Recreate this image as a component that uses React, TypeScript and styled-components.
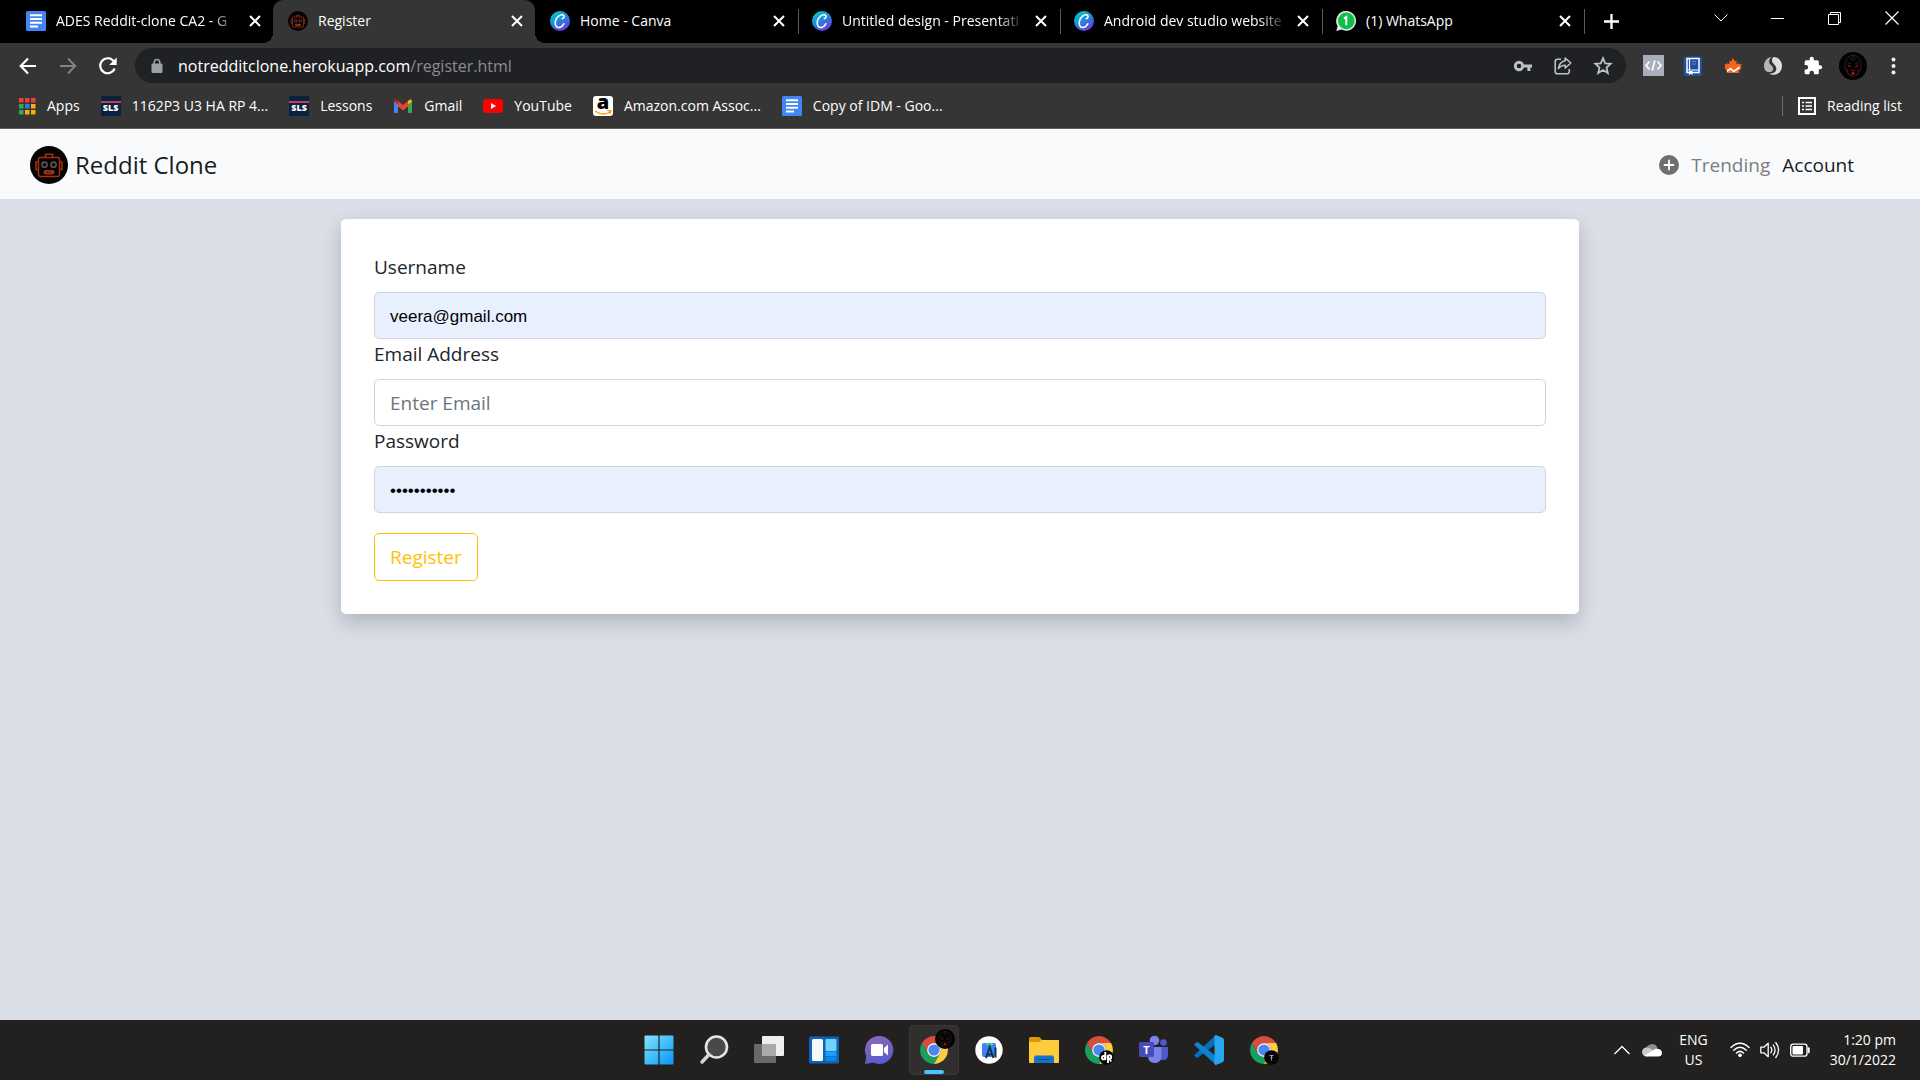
import React, { useState } from "react";
import styled, { createGlobalStyle, css } from "styled-components";

const uiFont = `"Open Sans", "Noto Sans", sans-serif`;

const GlobalStyle = createGlobalStyle`
  *, *::before, *::after { box-sizing: border-box; }
  body { margin: 0; background: #dadfe7; font-family: ${uiFont}; }
  button, input { font: inherit; color: inherit; }
  button { border: 0; padding: 0; background: none; cursor: pointer; }
  a { color: inherit; text-decoration: none; }
  svg { display: block; flex: none; }
`;

const Screen = styled.div`
  min-height: 100vh;
  display: flex;
  flex-direction: column;
`;

/* ---------- browser frame ---------- */

const Browser = styled.header`
  background: #353535;
  color: #fff;
  border-bottom: 1px solid #5f5f5f;
  font-size: 14px;
  line-height: 20px;
`;

const TabStrip = styled.div`
  display: flex;
  height: 43px;
  padding-left: 11px;
  background: #000;
`;

const Tab = styled.div<{ $active?: boolean; $divider?: boolean }>`
  flex: 0 1 262px;
  min-width: 0;
  display: flex;
  align-items: center;
  padding: 0 10px 2px 15px;
  position: relative;
  ${(p) =>
    p.$active &&
    css`
      background: #353535;
      border-radius: 10px 10px 0 0;
      &::before,
      &::after {
        content: "";
        position: absolute;
        bottom: 0;
        width: 10px;
        height: 10px;
      }
      &::before {
        right: 100%;
        background: radial-gradient(circle at 0 0, #000 10px, #353535 10px);
      }
      &::after {
        left: 100%;
        background: radial-gradient(circle at 100% 0, #000 10px, #353535 10px);
      }
    `}
  ${(p) =>
    p.$divider &&
    css`
      &::after {
        content: "";
        position: absolute;
        right: -2px;
        top: 9px;
        width: 1px;
        height: 25px;
        background: #5a5a5a;
      }
    `}
`;

const TabTitle = styled.a<{ $fade?: boolean }>`
  flex: 1;
  min-width: 0;
  margin: 0 8px 0 10px;
  overflow: hidden;
  white-space: nowrap;
  ${(p) =>
    p.$fade &&
    css`
      mask-image: linear-gradient(to left, transparent, #000 28px);
    `}
`;

const IconButton = styled.button<{ $size: number }>`
  display: grid;
  place-items: center;
  flex: none;
  width: ${(p) => p.$size}px;
  height: ${(p) => p.$size}px;
`;

const NewTab = styled(IconButton)`
  margin: 7px 0 0 14px;
`;

const WindowControls = styled.div`
  display: flex;
  margin-left: auto;
  height: 36px;
`;

const WindowButton = styled.button`
  width: 57px;
  display: grid;
  place-items: center;
`;

const Toolbar = styled.div`
  display: flex;
  align-items: center;
  height: 45px;
  padding: 0 7px 0 8px;
`;

const AddressBar = styled.div`
  flex: 1;
  display: flex;
  align-items: center;
  height: 35px;
  margin: 0 7px;
  padding: 0 3px 0 16px;
  border-radius: 18px;
  background: #202124;
`;

const AddressText = styled.label`
  flex: 1;
  display: flex;
  align-items: center;
  margin-left: 15px;
  font-size: 16px;
  line-height: 24px;
  color: #8b8b8d;
`;

const HostInput = styled.input`
  field-sizing: content;
  padding: 0;
  border: 0;
  outline: 0;
  background: none;
  color: #fff;
`;

const Bookmarks = styled.nav`
  display: flex;
  align-items: center;
  height: 40px;
  padding: 0 18px 4px 18px;
`;

const Bookmark = styled.a`
  display: flex;
  align-items: center;
  gap: 11px;
  margin-right: 21px;
  white-space: nowrap;
`;

const ReadingList = styled.button`
  display: flex;
  align-items: center;
  gap: 11px;
  height: 20px;
  margin-left: auto;
  padding-left: 15px;
  border-left: 1px solid #6e6e6e;
`;

const SlsBadge = styled.span`
  display: flex;
  align-items: center;
  justify-content: center;
  width: 20px;
  height: 20px;
  background: linear-gradient(#0b2140 5px, #c2405a 5px, #c2405a 7px, #0b2140 7px);
  font-size: 9px;
  font-weight: 800;
  line-height: 12px;
  padding-top: 3px;
`;

/* ---------- page ---------- */

const Navbar = styled.nav`
  display: flex;
  align-items: center;
  height: 70px;
  padding: 2px 66px 0 30px;
  background: #f8fafc;
  color: #1b1c1d;
`;

const Brand = styled.a`
  display: flex;
  align-items: center;
  gap: 7px;
  margin-right: auto;
  font-size: 24px;
  line-height: 36px;
`;

const NavLink = styled.a<{ $muted?: boolean }>`
  margin-left: 12px;
  font-size: 19px;
  line-height: 30px;
  color: ${(p) => (p.$muted ? "#7c7d7e" : "#1b1c1d")};
`;

const Main = styled.main`
  flex: 1;
  padding: 20px 24px;
`;

const Card = styled.form`
  max-width: 1238px;
  margin: 0 auto;
  padding: 33px;
  border-radius: 5px;
  background: #fff;
  box-shadow: 0 10px 20px rgba(0, 0, 0, 0.15), 0 2px 20px rgba(0, 0, 0, 0.05);
  color: #212529;
  font-size: 19px;
  line-height: 30px;
`;

const Label = styled.label`
  display: block;
  margin-bottom: 10px;
`;

const Input = styled.input<{ $filled?: boolean }>`
  display: block;
  width: 100%;
  height: 47px;
  padding: 8px 15px;
  border: 1px solid #ced4da;
  border-radius: 5px;
  outline: 0;
  background: #fff;
  &::placeholder {
    color: #6c757d;
    opacity: 1;
  }
  ${(p) =>
    p.$filled &&
    css`
      padding: 10px 15px 7px;
      background: #e8f0fe;
      color: #000;
      font-family: "Liberation Sans", sans-serif;
      font-size: 17px;
    `}
`;

const Submit = styled.button`
  height: 48px;
  margin-top: 20px;
  padding: 0 15px;
  border: 1px solid #ffc107;
  border-radius: 5px;
  color: #ffc107;
`;

/* ---------- taskbar ---------- */

const Taskbar = styled.footer`
  display: grid;
  grid-template-columns: 1fr auto 1fr;
  align-items: center;
  height: 60px;
  padding-left: 2px;
  background: #222120;
  color: #fff;
  font-size: 14px;
  line-height: 20px;
`;

const Apps = styled.div`
  grid-column: 2;
  display: flex;
  gap: 5px;
`;

const AppButton = styled.button<{ $current?: boolean }>`
  position: relative;
  display: grid;
  place-items: center;
  width: 50px;
  height: 50px;
  border-radius: 5px;
  ${(p) =>
    p.$current &&
    css`
      background: #302f2e;
      box-shadow: inset 0 0 0 1px #3a3938;
      &::after {
        content: "";
        position: absolute;
        left: 15px;
        bottom: 1px;
        width: 20px;
        height: 4px;
        border-radius: 2px;
        background: #4cc2ff;
      }
    `}
`;

const Tray = styled.div`
  justify-self: end;
  display: flex;
  align-items: center;
  padding-right: 24px;
`;

const TrayButton = styled.button<{ $gap: number; $align?: string }>`
  margin-left: ${(p) => p.$gap}px;
  display: flex;
  flex-direction: column;
  align-items: ${(p) => (p.$align === "right" ? "flex-end" : "center")};
`;

const TrayGroup = styled.button`
  display: flex;
  gap: 10px;
  margin-left: 22px;
`;

/* ---------- icons ---------- */

const CloseIcon = () => (
  <svg width="12" height="12" viewBox="0 0 12 12" stroke="#fff" strokeWidth="2">
    <path d="M1 1l10 10M11 1L1 11" />
  </svg>
);

const DocsIcon = () => (
  <svg width="20" height="20" viewBox="0 0 20 20">
    <rect width="20" height="20" rx="1.5" fill="#4285f4" />
    <path d="M4 4.3h12M4 8h12M4 11.8h12M4 15.5h8" stroke="#fff" strokeWidth="2" />
  </svg>
);

const CanvaIcon = () => (
  <svg width="20" height="20" viewBox="0 0 20 20">
    <defs>
      <linearGradient id="canva" x1="0.2" y1="0" x2="0.8" y2="1">
        <stop offset="0.1" stopColor="#06c1cc" />
        <stop offset="0.55" stopColor="#2b7bdb" />
        <stop offset="1" stopColor="#7d2ae8" />
      </linearGradient>
    </defs>
    <circle cx="10" cy="10" r="10" fill="url(#canva)" />
    <path
      d="M12.300 7.700c1.500-.3 2.200-2 1.600-3.100C13 3.300 10.800 3.400 8.900 4.900 6.400 6.900 5 10.300 5.300 13c.3 2.700 2.200 4 4.300 3.400 1.800-.4 3.300-1.800 4.200-3.600"
      fill="none"
      stroke="#fff"
      strokeWidth="1.6"
      strokeLinecap="round"
    />
  </svg>
);

const WhatsAppIcon = () => (
  <svg width="20" height="20" viewBox="0 0 20 20">
    <path d="M10.300 0a9.700 9.900 0 1 1-4.600 18.600L.3 20l1.300-5A9.900 9.900 0 0 1 10.300 0z" fill="#e6e6e6" />
    <circle cx="10.300" cy="9.900" r="8.300" fill="#0cbf46" />
    <path d="M8 7.600L10.300 6v8.200" fill="none" stroke="#fff" strokeWidth="2" />
  </svg>
);

const RobotIcon = ({ size }: { size: number }) => (
  <svg width={size} height={size} viewBox="0 0 38 38">
    <circle cx="19" cy="19" r="19" fill="#050303" />
    <g fill="none" stroke="#a5300c" strokeWidth="1.500">
      <path d="M15.500 11V8.200h7V11M10 11.500h18q1.500 0 1.500 1.500v15.500q0 2-2 2h-17q-2 0-2-2V13q0-1.500 1.500-1.500z" />
      <path d="M8.500 16H6v7.500h2.500M29.500 16H32v7.500h-2.500" />
    </g>
    <rect x="13.500" y="24" width="11" height="4.500" rx="2" fill="#a5300c" />
    <path d="M16.500 26.200h5" stroke="#2a0b02" strokeWidth="1" strokeDasharray="1.500 1" />
    <g fill="none" stroke="#5d5450" strokeWidth="1.600">
      <circle cx="14.500" cy="18.700" r="2.600" />
      <circle cx="23.500" cy="18.700" r="2.600" />
    </g>
  </svg>
);

const MaskIcon = ({ size }: { size: number }) => (
  <svg width={size} height={size} viewBox="0 0 28 28">
    <circle cx="14" cy="14" r="14" fill="#030202" />
    <g fill="none" stroke="#282326" strokeWidth="1">
      <path d="M6 16C5 8 9 3.500 14 3.500S23 8 22 16l-3 6-5 3-5-3z" />
      <circle cx="14" cy="6.500" r="1.800" />
      <path d="M8 10l4 2M20 10l-4 2" />
    </g>
    <path d="M8.500 12.500l4 2-3 .2zM19.500 12.500l-4 2 3 .2z" fill="#c4101a" />
    <path d="M14 19l1.800 3.500h-3.600z" fill="#f01820" />
    <path d="M8.500 17l.5 4 2 3M19.500 17l-.5 4-2 3M11.500 18.500h5" fill="none" stroke="#5e0a10" strokeWidth="1" />
  </svg>
);

const BackIcon = () => (
  <svg width="18" height="18" viewBox="0 0 18 18" fill="none" stroke="#fff" strokeWidth="2.200">
    <path d="M17 9H2M9 1.500L1.700 9 9 16.500" />
  </svg>
);

const ForwardIcon = () => (
  <svg width="18" height="18" viewBox="0 0 18 18" fill="none" stroke="#848484" strokeWidth="1.800">
    <path d="M1 9h15M9 1.500L16.300 9 9 16.500" />
  </svg>
);

const ReloadIcon = () => (
  <svg width="20" height="20" viewBox="0 0 20 20">
    <path d="M16.700 12.500A7.500 7.500 0 1 1 15.300 4.700L17 6.500" fill="none" stroke="#fff" strokeWidth="2.200" />
    <path d="M18.700 1.500v7.500h-7.500z" fill="#fff" />
  </svg>
);

const LockIcon = () => (
  <svg width="12" height="16" viewBox="0 0 12 16">
    <path d="M3.200 6V4.200a2.800 2.800 0 0 1 5.600 0V6" fill="none" stroke="#9aa0a6" strokeWidth="1.500" />
    <rect x="0.500" y="5.500" width="11" height="9.500" rx="1.300" fill="#9aa0a6" />
  </svg>
);

const KeyIcon = () => (
  <svg width="20" height="20" viewBox="0 0 20 20" fill="none" stroke="#bdc1c6">
    <circle cx="6" cy="10" r="3.700" strokeWidth="2.900" />
    <path d="M9.500 10H19M15.900 10v5" strokeWidth="3" />
  </svg>
);

const ShareIcon = () => (
  <svg width="20" height="20" viewBox="0 0 20 20" fill="none" stroke="#bdc1c6" strokeWidth="1.600">
    <path d="M8 3.300H4.500Q2.200 3.300 2.200 5.600v9.800q0 2.300 2.300 2.300H14q2.300 0 2.300-2.300V13" />
    <path d="M12.200 2l5.600 5-5.600 5V9.200C9 9.200 7 10.300 5.400 12.500 6 8.500 8.200 5.500 12.200 4.800z" strokeLinejoin="round" />
  </svg>
);

const StarIcon = () => (
  <svg width="20" height="20" viewBox="0 0 20 20">
    <path
      d="M10 2.200l2.200 5.100 5.500.500-4.200 3.700 1.300 5.500-4.800-2.900L5.200 17l1.300-5.500L2.300 7.800l5.500-.500z"
      fill="none"
      stroke="#bdc1c6"
      strokeWidth="1.800"
    />
  </svg>
);

const CodeExtIcon = () => (
  <svg width="21" height="21" viewBox="0 0 21 21">
    <rect width="21" height="21" fill="#a9aebb" />
    <path d="M6.500 6.500L3 10.500l3.500 4M14.500 6.500l3.500 4-3.500 4M11.800 5.500l-2.600 10" fill="none" stroke="#fff" strokeWidth="1.700" />
  </svg>
);

const BookExtIcon = () => (
  <svg width="20" height="20" viewBox="0 0 20 20">
    <rect x="0.500" y="0.500" width="18.500" height="19.500" rx="2" fill="#1f4fa3" />
    <path d="M4 2.500h12v14H4z" fill="none" stroke="#fff" strokeWidth="1.500" />
    <path d="M6.500 3v10.500M3.500 14h12" stroke="#fff" strokeWidth="1.200" />
    <path d="M9.500 5.500h4M9.500 8h4" stroke="#cfdcf5" strokeWidth="0.800" strokeDasharray="1 1" />
    <path d="M6 15h3.500v4l-1.700-1.300L6 19z" fill="#fff" />
  </svg>
);

const MapleExtIcon = () => (
  <svg width="20" height="20" viewBox="0 0 20 20">
    <path
      d="M10 2l2 3.400 1.600-.8-.2 4L15.500 7l.6 1.300 2.400-.3-.8 3 .9 1.100-2.600 2.700.2 2.200H3.800l.2-2.200-2.600-2.700.9-1.100-.8-3 2.400.3L4.500 7l2.100 1.600-.2-4 1.600.8z"
      fill="#f4651f"
    />
    <path d="M4 15.300l3.500-2.600 3.300 2.700 5.700-4.200" fill="none" stroke="#fff" strokeWidth="1.700" />
  </svg>
);

const SpiralExtIcon = () => (
  <svg width="20" height="20" viewBox="0 0 20 20">
    <path d="M8.500 1C4 1.500 1 5.300 1 9.800c0 2 .5 3.500 1.500 5 2.500 2 6.500 1.700 7.500-.8.8-2.300-.8-3.700-2.300-5.200C5.500 6.500 5.500 3.500 8.500 1z" fill="#b5b5b5" />
    <path d="M10.500 1C15.500 1 19 5 19 10c0 4.500-3 8.500-8 8.800-2 .1-3.800-.3-5-1.200 4 .4 6.500-1 7.200-3.800.6-2.500-.7-4-2.200-5.600C8.500 5.700 8.300 3 10.500 1z" fill="#dedede" />
  </svg>
);

const PuzzleIcon = () => (
  <svg width="20" height="20" viewBox="0 0 24 24">
    <path
      d="M20.500 11H19V7c0-1.100-.9-2-2-2h-4V3.500a2.500 2.500 0 0 0-5 0V5H4c-1.100 0-2 .9-2 2v3.800h1.500a2.700 2.700 0 0 1 0 5.400H2V20c0 1.100.9 2 2 2h3.800v-1.500a2.700 2.700 0 0 1 5.400 0V22H17c1.100 0 2-.9 2-2v-4h1.500a2.500 2.500 0 0 0 0-5z"
      fill="#fff"
    />
  </svg>
);

const DotsIcon = () => (
  <svg width="5" height="18" viewBox="0 0 5 18" fill="#f1f1f1">
    <circle cx="2.500" cy="2.500" r="2" />
    <circle cx="2.500" cy="9" r="2" />
    <circle cx="2.500" cy="15.500" r="2" />
  </svg>
);

const AppsGridIcon = () => {
  const colors = ["#ea4335", "#ea4335", "#ea4335", "#34a853", "#1a83f0", "#fbae0b", "#34a853", "#f9ab00", "#f9ab00"];
  return (
    <svg width="18" height="18" viewBox="0 0 18 18">
      {colors.map((c, i) => (
        <rect key={i} x={1 + (i % 3) * 6} y={1 + Math.floor(i / 3) * 6} width="4.500" height="4.500" fill={c} />
      ))}
    </svg>
  );
};

const GmailIcon = () => (
  <svg width="20" height="20" viewBox="0 0 20 20">
    <path d="M1 5v10.500q0 1.500 1.300 1.500H5V8z" fill="#4285f4" />
    <path d="M19 5v10.500q0 1.500-1.300 1.500H15V8z" fill="#34a853" />
    <path d="M15 5l1.500-1.200Q19 2.700 19 5.500L15 8.500z" fill="#fbbc04" />
    <path d="M5 5L3.500 3.800Q1 2.700 1 5.500L5 8.500z" fill="#c5221f" />
    <path d="M5 5l5 4 5-4v5.500l-5 4-5-4z" fill="#ea4335" />
  </svg>
);

const YouTubeIcon = () => (
  <svg width="20" height="20" viewBox="0 0 20 20">
    <rect y="3" width="20" height="14" rx="3.500" fill="#f00" />
    <path d="M8 7l5 3-5 3z" fill="#fff" />
  </svg>
);

const AmazonBadge = styled.span`
  position: relative;
  display: flex;
  justify-content: center;
  width: 20px;
  height: 20px;
  border-radius: 3px;
  background: #fff;
  color: #000;
  font-size: 20px;
  font-weight: 800;
  line-height: 12px;
  svg {
    position: absolute;
    left: 0;
    bottom: 0;
  }
`;

const AmazonIcon = () => (
  <AmazonBadge>
    a
    <svg width="20" height="7" viewBox="0 0 20 7">
      <path d="M2 2q8 5.500 15 1M14.500 1.500l3.300.3-1 3" fill="none" stroke="#f90" strokeWidth="1.400" />
    </svg>
  </AmazonBadge>
);

const ListIcon = () => (
  <svg width="18" height="18" viewBox="0 0 18 18" fill="none" stroke="#fff">
    <rect x="1" y="1" width="16" height="16" strokeWidth="2" />
    <path d="M4 5.500h2M4 9h2M4 12.500h2M7.500 5.500H14M7.500 9H14M7.500 12.500H14" strokeWidth="1.600" />
  </svg>
);

const PlusCircleIcon = () => (
  <svg width="20" height="20" viewBox="0 0 20 20">
    <circle cx="10" cy="10" r="10" fill="#6f6f70" />
    <path d="M10 5.500v9M5.500 10h9" stroke="#fff" strokeWidth="1.800" strokeLinecap="round" />
  </svg>
);

const StartIcon = () => (
  <svg width="30" height="30" viewBox="0 0 30 30">
    <defs>
      <linearGradient id="start" x1="0" y1="0" x2="1" y2="1">
        <stop offset="0" stopColor="#8be0fd" />
        <stop offset="0.500" stopColor="#41bff8" />
        <stop offset="1" stopColor="#0a93fa" />
      </linearGradient>
    </defs>
    <rect x="0.500" y="0.500" width="29" height="29" rx="1" fill="url(#start)" />
    <path d="M15 0v30M0 15h30" stroke="#222120" strokeWidth="1.200" />
  </svg>
);

const SearchIcon = () => (
  <svg width="30" height="30" viewBox="0 0 30 30">
    <circle cx="17.500" cy="12" r="10.500" fill="#4b484a" stroke="#e3e5e6" strokeWidth="2.600" />
    <path d="M10 19.500L3 27" stroke="#d3d7d9" strokeWidth="3.500" strokeLinecap="round" />
  </svg>
);

const TaskViewIcon = () => (
  <svg width="30" height="30" viewBox="0 0 30 30">
    <rect x="0" y="9" width="22" height="19" rx="1" fill="#696969" />
    <rect x="8" y="1" width="22" height="20" rx="1" fill="#efefef" />
    <path d="M8 9h14v12H8z" fill="#a9a9a9" />
  </svg>
);

const WidgetsIcon = () => (
  <svg width="30" height="30" viewBox="0 0 30 30">
    <rect y="1.500" width="30" height="27" rx="1.500" fill="#0f63b5" />
    <rect x="3" y="4" width="11" height="22" rx="1.500" fill="#f5f6f8" />
    <rect x="16.500" y="4" width="11" height="12" rx="1" fill="#70d3fd" />
    <rect x="16.500" y="16.500" width="11" height="4.500" fill="#1aa0f4" />
    <rect x="16.500" y="21.500" width="11" height="4.500" fill="#0c86e8" />
  </svg>
);

const ChatIcon = () => (
  <svg width="30" height="30" viewBox="0 0 30 30">
    <defs>
      <linearGradient id="chat" x1="0.300" y1="0" x2="0.700" y2="1">
        <stop offset="0" stopColor="#9067b8" />
        <stop offset="1" stopColor="#545ad0" />
      </linearGradient>
    </defs>
    <path d="M15 1a14 14 0 1 1-6 26.500Q5 29 .500 28.500 2.500 25 2 20.500A14 14 0 0 1 15 1z" fill="url(#chat)" />
    <rect x="7" y="9" width="12" height="12" rx="1.500" fill="#fff" />
    <path d="M20 13l4-3.500v11L20 17z" fill="#fff" />
  </svg>
);

const ChromeIcon = ({ children }: { children?: React.ReactNode }) => (
  <svg width="30" height="30" viewBox="0 0 30 30" overflow="visible">
    <path d="M2.900 8A14 14 0 0 1 27.100 8H15a7 7 0 0 0-6.100 10.500z" fill="#db4c3f" />
    <path d="M2.900 8A14 14 0 0 0 15 29l6.100-10.500a7 7 0 0 1-12.200 0z" fill="#17a05e" />
    <path d="M27.100 8A14 14 0 0 1 15 29l6.100-10.500A7 7 0 0 0 15 8z" fill="#ffcd41" />
    <circle cx="15" cy="15" r="7" fill="#f1f1f1" />
    <circle cx="15" cy="15" r="5.600" fill="#4a87ee" />
    {children}
  </svg>
);

const StudioIcon = () => (
  <svg width="30" height="30" viewBox="0 0 30 30">
    <circle cx="15" cy="15" r="13.700" fill="#fff" />
    <rect x="8" y="8" width="14" height="14" rx="2" fill="#3f83f3" />
    <path d="M11 10a5 4.500 0 0 1 9 0z" fill="#3ddc84" />
    <path d="M12 23l3.700-11 3.700 11M13 19.500h5.500M21.500 12.500v10" fill="none" stroke="#0c3048" strokeWidth="1.900" />
  </svg>
);

const FolderIcon = () => (
  <svg width="30" height="30" viewBox="0 0 30 30">
    <path d="M0 3.500Q0 2 1.500 2h8q1 0 1.700.8L13 5v4H0z" fill="#d99a05" />
    <path d="M0 7h10l2.500-2H30v22q0 1-1 1H1q-1 0-1-1z" fill="#fdcb3c" />
    <path d="M5 28v-5.500q0-2 2-2h16q2 0 2 2V28z" fill="#1374c8" />
    <path d="M8.500 24.500h13" stroke="#0b4d8c" strokeWidth="1" />
  </svg>
);

const Glyph = styled.text`
  font-family: ${uiFont};
  font-weight: 700;
  fill: #fff;
  text-anchor: middle;
`;

const TeamsIcon = () => (
  <svg width="30" height="30" viewBox="0 0 30 30">
    <circle cx="24.500" cy="7.500" r="3.300" fill="#5059c9" />
    <path d="M19 12h10v8q0 5-5 5h-5z" fill="#5059c9" />
    <circle cx="15.500" cy="5.500" r="4.800" fill="#7b83eb" />
    <path d="M9 12h13.500v9q0 7-6.700 7T9 21z" fill="#7b83eb" />
    <rect y="7" width="15" height="15" rx="1.500" fill="#464cb8" />
    <Glyph x="7.500" y="18.500" fontSize="11">T</Glyph>
  </svg>
);

const CodeIcon = () => (
  <svg width="30" height="30" viewBox="0 0 30 30">
    <path d="M22 0L.800 19.500q-.8.800 0 1.600l1.600 1.500q.8.600 1.600 0L22 9z" fill="#0a6fb8" />
    <path d="M22 30L.800 10.400q-.8-.8 0-1.600l1.600-1.500q.8-.6 1.600 0L22 21z" fill="#0e83cd" />
    <path d="M22 0l6.500 2.800Q30 3.500 30 5v20q0 1.500-1.500 2.200L22 30q-1 0-1.500-1V1z" fill="#27a7ee" />
  </svg>
);

const WifiIcon = () => (
  <svg width="20" height="20" viewBox="0 0 20 20" fill="none" stroke="#fff" strokeWidth="1.500" strokeLinecap="round">
    <path d="M1 7.500q9-8.500 18 0M3.700 10.300q6.300-6 12.600 0M6.500 13q3.500-3.300 7 0" />
    <circle cx="10" cy="15.300" r="1.400" fill="#fff" strokeWidth="1" />
  </svg>
);

const SoundIcon = () => (
  <svg width="20" height="20" viewBox="0 0 20 20" fill="none" stroke="#fff" strokeWidth="1.300">
    <path d="M.8 7.200h3L8.200 3.300v13.400L3.800 12.800h-3z" strokeLinejoin="round" />
    <path d="M10.800 7.200q2 2.800 0 5.600M13.300 5q3.500 5 0 10M15.800 2.500q5.500 7.500 0 15" strokeLinecap="round" />
  </svg>
);

const BatteryIcon = () => (
  <svg width="20" height="20" viewBox="0 0 20 20">
    <rect x="0.700" y="4.200" width="16.300" height="12" rx="2.500" fill="none" stroke="#fff" strokeWidth="1.300" />
    <rect x="2.500" y="6" width="10.500" height="8.500" rx="1" fill="#fff" />
    <path d="M18.700 8.300v4" stroke="#fff" strokeWidth="2" strokeLinecap="round" />
  </svg>
);

const CloudIcon = () => (
  <svg width="20" height="14" viewBox="0 0 20 14">
    <path d="M4 6A6 6 0 0 1 15.500 5L10 9z" fill="#8e8e8e" />
    <path d="M4.500 13.500A4.500 4.500 0 0 1 4.500 4.500q3-.5 5.500 2l4 3z" fill="#c9c9c9" />
    <path d="M2.500 12.500L14 5.500q6 .300 6 4.500-.2 3.500-4 3.500H4.500z" fill="#fff" />
  </svg>
);

/* ---------- data ---------- */

const tabs = [
  { title: "ADES Reddit-clone CA2 - G", icon: <DocsIcon />, fade: true },
  { title: "Register", icon: <RobotIcon size={20} />, active: true },
  { title: "Home - Canva", icon: <CanvaIcon />, divider: true },
  { title: "Untitled design - Presentati", icon: <CanvaIcon />, fade: true, divider: true },
  { title: "Android dev studio website", icon: <CanvaIcon />, fade: true, divider: true },
  { title: "(1) WhatsApp", icon: <WhatsAppIcon />, divider: true },
];

const bookmarks = [
  { title: "Apps", icon: <AppsGridIcon /> },
  { title: "1162P3 U3 HA RP 4...", icon: <SlsBadge>SLS</SlsBadge> },
  { title: "Lessons", icon: <SlsBadge>SLS</SlsBadge> },
  { title: "Gmail", icon: <GmailIcon /> },
  { title: "YouTube", icon: <YouTubeIcon /> },
  { title: "Amazon.com Assoc...", icon: <AmazonIcon /> },
  { title: "Copy of IDM - Goo...", icon: <DocsIcon /> },
];

const extensions = [
  { name: "Code viewer", icon: <CodeExtIcon /> },
  { name: "Notebook", icon: <BookExtIcon /> },
  { name: "Maple", icon: <MapleExtIcon /> },
  { name: "Spiral", icon: <SpiralExtIcon /> },
  { name: "Extensions", icon: <PuzzleIcon /> },
];

const apps = [
  { name: "Start", icon: <StartIcon /> },
  { name: "Search", icon: <SearchIcon /> },
  { name: "Task view", icon: <TaskViewIcon /> },
  { name: "Widgets", icon: <WidgetsIcon /> },
  { name: "Chat", icon: <ChatIcon /> },
  {
    name: "Chrome",
    current: true,
    icon: (
      <ChromeIcon>
        <g transform="translate(16 -6)">
          <MaskIcon size={20} />
        </g>
      </ChromeIcon>
    ),
  },
  { name: "Android Studio", icon: <StudioIcon /> },
  { name: "File Explorer", icon: <FolderIcon /> },
  {
    name: "Chrome, second profile",
    icon: (
      <ChromeIcon>
        <circle cx="22.500" cy="22.500" r="7.300" fill="#060606" />
        <g fill="none" stroke="#fff" strokeWidth="1.900">
          <path d="M21.300 17v7.500" />
          <circle cx="19.700" cy="22.700" r="1.700" />
          <path d="M24 28v-7.500" />
          <circle cx="25.500" cy="22" r="1.700" />
          <path d="M25.500 24l1.700 2.500" />
        </g>
      </ChromeIcon>
    ),
  },
  { name: "Teams", icon: <TeamsIcon /> },
  { name: "Visual Studio Code", icon: <CodeIcon /> },
  {
    name: "Chrome, third profile",
    icon: (
      <ChromeIcon>
        <circle cx="22.500" cy="22.500" r="7.300" fill="#060406" />
        <path d="M20.500 20.500h4M22.500 20v5.500M21.500 22.500h2" stroke="#a497a8" strokeWidth="1" />
      </ChromeIcon>
    ),
  },
];

export default function App() {
  const [username, setUsername] = useState("veera@gmail.com");
  const [email, setEmail] = useState("");
  const [password, setPassword] = useState("veera123456");
  const [host, setHost] = useState("notredditclone.herokuapp.com");

  return (
    <Screen>
      <GlobalStyle />
      <Browser>
        <TabStrip>
          {tabs.map((t) => (
            <Tab key={t.title} $active={t.active} $divider={t.divider}>
              {t.icon}
              <TabTitle href="#" $fade={t.fade}>{t.title}</TabTitle>
              <IconButton $size={16} aria-label="Close tab"><CloseIcon /></IconButton>
            </Tab>
          ))}
          <NewTab $size={28} aria-label="New tab">
            <svg width="15" height="15" viewBox="0 0 15 15" stroke="#fff" strokeWidth="2.300">
              <path d="M7.500 0v15M0 7.500h15" />
            </svg>
          </NewTab>
          <WindowControls>
            <WindowButton aria-label="Search tabs">
              <svg width="14" height="8" viewBox="0 0 14 8" fill="none" stroke="#fff"><path d="M.5.5L7 7l6.500-6.500" /></svg>
            </WindowButton>
            <WindowButton aria-label="Minimize">
              <svg width="13" height="1" viewBox="0 0 13 1"><rect width="13" height="1" fill="#fff" /></svg>
            </WindowButton>
            <WindowButton aria-label="Restore">
              <svg width="13" height="13" viewBox="0 0 13 13" fill="none" stroke="#fff"><path d="M.5 2.500h10v10H.5zM2.500 2.500v-2h10v10h-2" /></svg>
            </WindowButton>
            <WindowButton aria-label="Close">
              <svg width="14" height="14" viewBox="0 0 14 14" stroke="#fff" strokeWidth="1.200"><path d="M.5.500l13 13M13.500.500l-13 13" /></svg>
            </WindowButton>
          </WindowControls>
        </TabStrip>
        <Toolbar>
          <IconButton $size={40} aria-label="Back"><BackIcon /></IconButton>
          <IconButton $size={40} aria-label="Forward"><ForwardIcon /></IconButton>
          <IconButton $size={40} aria-label="Reload"><ReloadIcon /></IconButton>
          <AddressBar>
            <LockIcon />
            <AddressText>
              <HostInput aria-label="Address" value={host} onChange={(e) => setHost(e.target.value)} />
              <span>/register.html</span>
            </AddressText>
            <IconButton $size={40} aria-label="Passwords"><KeyIcon /></IconButton>
            <IconButton $size={40} aria-label="Share"><ShareIcon /></IconButton>
            <IconButton $size={40} aria-label="Bookmark"><StarIcon /></IconButton>
          </AddressBar>
          {extensions.map((x) => (
            <IconButton key={x.name} $size={40} aria-label={x.name}>{x.icon}</IconButton>
          ))}
          <IconButton $size={40} aria-label="Profile"><MaskIcon size={28} /></IconButton>
          <IconButton $size={40} aria-label="Menu"><DotsIcon /></IconButton>
        </Toolbar>
        <Bookmarks>
          {bookmarks.map((b) => (
            <Bookmark key={b.title} href="#">{b.icon}{b.title}</Bookmark>
          ))}
          <ReadingList><ListIcon />Reading list</ReadingList>
        </Bookmarks>
      </Browser>

      <Navbar>
        <Brand href="#"><RobotIcon size={38} />Reddit Clone</Brand>
        <IconButton $size={20} aria-label="Create post"><PlusCircleIcon /></IconButton>
        <NavLink href="#" $muted>Trending</NavLink>
        <NavLink href="#">Account</NavLink>
      </Navbar>

      <Main>
        <Card onSubmit={(e) => e.preventDefault()}>
          <Label htmlFor="username">Username</Label>
          <Input id="username" $filled value={username} onChange={(e) => setUsername(e.target.value)} />
          <Label htmlFor="email">Email Address</Label>
          <Input id="email" type="email" placeholder="Enter Email" value={email} onChange={(e) => setEmail(e.target.value)} />
          <Label htmlFor="password">Password</Label>
          <Input id="password" type="password" $filled value={password} onChange={(e) => setPassword(e.target.value)} />
          <Submit type="submit">Register</Submit>
        </Card>
      </Main>

      <Taskbar>
        <Apps>
          {apps.map((a) => (
            <AppButton key={a.name} aria-label={a.name} $current={a.current}>{a.icon}</AppButton>
          ))}
        </Apps>
        <Tray>
          <TrayButton $gap={0} aria-label="Show hidden icons">
            <svg width="16" height="10" viewBox="0 0 16 10" fill="none" stroke="#fff" strokeWidth="1.300"><path d="M.5 9L8 1.500 15.500 9" /></svg>
          </TrayButton>
          <TrayButton $gap={12} aria-label="OneDrive"><CloudIcon /></TrayButton>
          <TrayButton $gap={17}><span>ENG</span><span>US</span></TrayButton>
          <TrayGroup aria-label="Network, sound and battery">
            <WifiIcon />
            <SoundIcon />
            <BatteryIcon />
          </TrayGroup>
          <TrayButton $gap={20} $align="right"><span>1:20 pm</span><span>30/1/2022</span></TrayButton>
        </Tray>
      </Taskbar>
    </Screen>
  );
}
